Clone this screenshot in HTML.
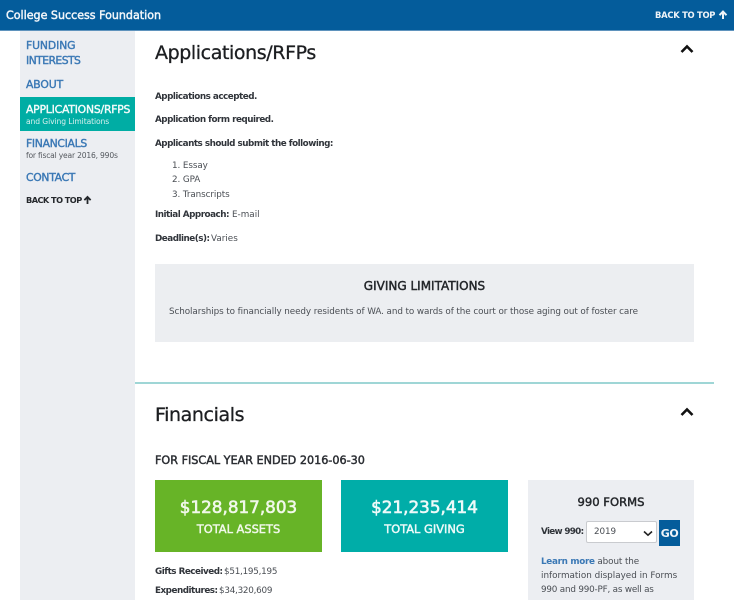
<!DOCTYPE html>
<html><head><meta charset="utf-8"><style>
html,body{margin:0;padding:0;background:#fff}
body{width:734px;height:600px;overflow:hidden;position:relative;font-family:"DejaVu Sans","Liberation Sans",sans-serif;color:#3c4046}
#w{position:absolute;left:0;top:0;width:734px;height:600px;overflow:hidden;background:#fff;filter:blur(.3px)}
.t{position:absolute;white-space:nowrap;line-height:1}
.b{font-weight:bold}
.s{-webkit-text-stroke:.45px currentColor}
.r{position:absolute}
.nav{color:#3a78b5;font-size:10.8px;-webkit-text-stroke:.4px currentColor}
.body{font-size:8.8px;color:#4a4e54;letter-spacing:-.1px}
.st{font-size:8.8px;color:#30343a;font-weight:bold;letter-spacing:-.5px}
</style></head><body><div id="w">
<div class="r" style="left:0;top:0;width:734px;height:30px;background:#045c9b;border-bottom:1px solid #5f93bd"></div>
<div class="t s" style="left:6px;top:9.5px;font-size:11.1px;color:#f2f6fa">College Success Foundation</div>
<div class="t b" style="left:655px;top:11px;font-size:8.4px;color:#eef3f8;letter-spacing:-.27px">BACK TO TOP</div>
<svg class="r" style="left:718px;top:10px" width="10" height="10" viewBox="0 0 10 10"><path d="M5 9V2M1.5 5.2 5 1.6l3.5 3.6" fill="none" stroke="#eef3f8" stroke-width="2"/></svg>

<div class="r" style="left:20px;top:31px;width:115px;height:569px;background:#eceef2"></div>
<div class="r" style="left:20px;top:97px;width:115px;height:34px;background:#00ada4"></div>
<div class="t nav" style="left:26px;top:41px;letter-spacing:-.1px">FUNDING</div>
<div class="t nav" style="left:26px;top:56px;letter-spacing:-.55px">INTERESTS</div>
<div class="t nav" style="left:26px;top:80px;letter-spacing:-.1px">ABOUT</div>
<div class="t nav" style="left:26px;top:105px;color:#f4fbfa;letter-spacing:-.2px">APPLICATIONS/RFPS</div>
<div class="t" style="left:26px;top:118.3px;font-size:7.6px;color:#d7f0ee;letter-spacing:-.1px">and Giving Limitations</div>
<div class="t nav" style="left:26px;top:139px;letter-spacing:-.3px">FINANCIALS</div>
<div class="t" style="left:26px;top:151.8px;font-size:7.6px;color:#55595f;letter-spacing:-.2px">for fiscal year 2016, 990s</div>
<div class="t nav" style="left:26px;top:173px;letter-spacing:-.3px">CONTACT</div>
<div class="t b" style="left:26px;top:196px;font-size:8.2px;color:#25282c;letter-spacing:-.55px">BACK TO TOP</div>
<svg class="r" style="left:83px;top:195px" width="9" height="10" viewBox="0 0 10 10"><path d="M5 9.5V2M1.5 5.2 5 1.6l3.5 3.6" fill="none" stroke="#25282c" stroke-width="2"/></svg>

<div class="t" style="left:155px;top:44px;font-size:19px;color:#1c1e21;letter-spacing:-.4px;-webkit-text-stroke:.3px currentColor">Applications/RFPs</div>
<svg class="r" style="left:680px;top:44px" width="14" height="10" viewBox="0 0 14 10"><path d="M1.5 8 7 2.5 12.5 8" fill="none" stroke="#111" stroke-width="2.6"/></svg>

<div class="t st" style="left:155px;top:92.5px">Applications accepted.</div>
<div class="t st" style="left:155px;top:116px">Application form required.</div>
<div class="t st" style="left:155px;top:139.5px">Applicants should submit the following:</div>
<div class="t body" style="left:172px;top:162px">1. Essay</div>
<div class="t body" style="left:172px;top:176px">2. GPA</div>
<div class="t body" style="left:172px;top:190.5px">3. Transcripts</div>
<div class="t st" style="left:155px;top:211px">Initial Approach:</div>
<div class="t body" style="left:232px;top:211px;letter-spacing:0">E-mail</div>
<div class="t st" style="left:155px;top:235px">Deadline(s):</div>
<div class="t body" style="left:211px;top:235px;letter-spacing:0">Varies</div>

<div class="r" style="left:155px;top:264px;width:539px;height:78px;background:#eceef1"></div>
<div class="t s" style="left:155px;width:539px;text-align:center;top:279.5px;font-size:12px;color:#24272b">GIVING LIMITATIONS</div>
<div class="t" style="left:169px;top:308px;font-size:8.8px;color:#4a4e54;letter-spacing:-.085px">Scholarships to financially needy residents of WA. and to wards of the court or those aging out of foster care</div>

<div class="r" style="left:135px;top:382px;width:579px;height:2px;background:#9fd6d6"></div>
<div class="t" style="left:155px;top:406px;font-size:19px;color:#1c1e21;letter-spacing:-.4px;-webkit-text-stroke:.3px currentColor">Financials</div>
<svg class="r" style="left:680px;top:407px" width="14" height="10" viewBox="0 0 14 10"><path d="M1.5 8 7 2.5 12.5 8" fill="none" stroke="#111" stroke-width="2.6"/></svg>

<div class="t s" style="left:155px;top:455px;font-size:11.2px;color:#2b2e33">FOR FISCAL YEAR ENDED 2016-06-30</div>
<div class="r" style="left:155px;top:480px;width:167px;height:72px;background:#67b427"></div>
<div class="t" style="left:155px;width:167px;text-align:center;top:498.5px;font-size:16.8px;-webkit-text-stroke:.6px currentColor;color:#f1f8ea">$128,817,803</div>
<div class="t s" style="left:155px;width:167px;text-align:center;top:523.5px;font-size:11.4px;color:#f1f8ea">TOTAL ASSETS</div>
<div class="r" style="left:341px;top:480px;width:167px;height:72px;background:#00ada8"></div>
<div class="t" style="left:341px;width:167px;text-align:center;top:498.5px;font-size:16.8px;-webkit-text-stroke:.6px currentColor;color:#eefaf9">$21,235,414</div>
<div class="t s" style="left:341px;width:167px;text-align:center;top:523.5px;font-size:11.4px;color:#eefaf9">TOTAL GIVING</div>
<div class="t st" style="left:155px;top:568px">Gifts Received:</div>
<div class="t body" style="left:224px;top:568px;letter-spacing:-.25px">$51,195,195</div>
<div class="t st" style="left:155px;top:587px">Expenditures:</div>
<div class="t body" style="left:219px;top:587px;letter-spacing:-.25px">$34,320,609</div>

<div class="r" style="left:528px;top:480px;width:166px;height:120px;background:#eceef2"></div>
<div class="t s" style="left:528px;width:166px;text-align:center;top:497px;font-size:11.6px;color:#25282c">990 FORMS</div>
<div class="t st" style="left:541px;top:527.5px;letter-spacing:-.7px">View 990:</div>
<div class="r" style="left:586px;top:521px;width:69px;height:20px;background:#fff;border:1px solid #c9cbcf;border-radius:2px"></div>
<div class="t body" style="left:594px;top:528px">2019</div>
<svg class="r" style="left:643px;top:530px" width="10" height="7" viewBox="0 0 10 7"><path d="M1 1.5 5 5.2 9 1.5" fill="none" stroke="#222" stroke-width="1.6"/></svg>
<div class="r" style="left:659px;top:520px;width:21px;height:26px;background:#045c9b"></div>
<div class="t b" style="left:659px;width:21px;text-align:center;top:528px;font-size:11px;color:#eef3f8;letter-spacing:-.4px">GO</div>
<div class="t" style="left:541px;top:557.5px;font-size:8.8px;color:#4a4e54;letter-spacing:-.1px"><span style="color:#3a78b5;font-weight:bold;letter-spacing:-.3px">Learn more</span> about the</div>
<div class="t body" style="left:541px;top:571.5px;letter-spacing:0">information displayed in Forms</div>
<div class="t body" style="left:541px;top:585.5px;letter-spacing:-.2px">990 and 990-PF, as well as</div>
</div></body></html>
